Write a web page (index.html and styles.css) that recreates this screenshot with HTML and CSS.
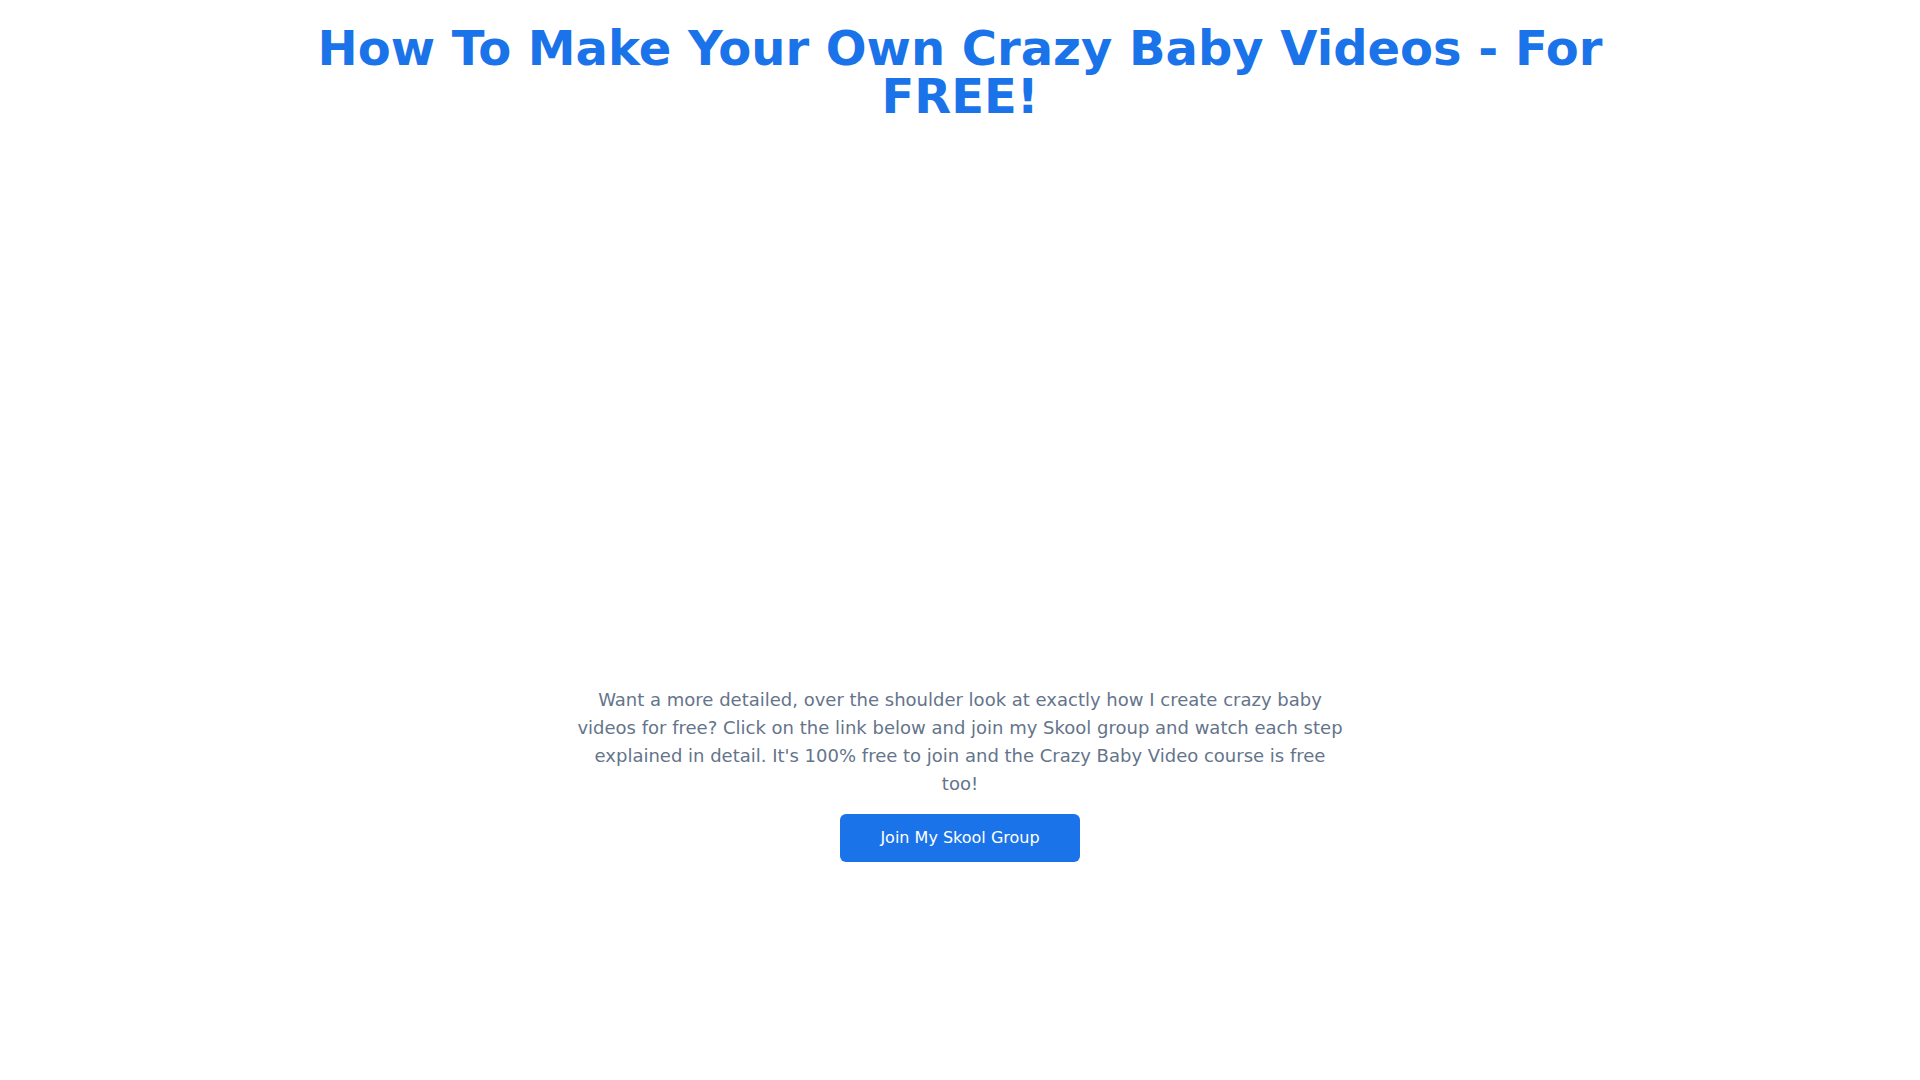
FILE: index.html
```html
<!DOCTYPE html>
<html lang="en">
<head>
<meta charset="utf-8">
<title>How To Make Your Own Crazy Baby Videos - For FREE!</title>
<link rel="stylesheet" href="styles.css">
</head>
<body>
<main class="page">
  <h1 class="title">How To Make Your Own Crazy Baby Videos - For FREE!</h1>
  <div class="video"></div>
  <p class="lead">Want a more detailed, over the shoulder look at exactly how I create crazy baby videos for free? Click on the link below and join my Skool group and watch each step explained in detail. It's 100% free to join and the Crazy Baby Video course is free too!</p>
  <a class="btn" href="#">Join My Skool Group</a>
</main>
</body>
</html>
```
FILE: styles.css
```css
html, body {
  margin: 0;
  padding: 0;
  background: #ffffff;
}
body {
  font-family: "DejaVu Sans", sans-serif;
}
.page {
  display: flex;
  flex-direction: column;
  align-items: center;
  padding: 24px 16px 40px;
}
.title {
  margin: 0;
  max-width: 1320px;
  font-size: 48px;
  line-height: 48px;
  font-weight: 700;
  color: #1a73e8;
  text-align: center;
}
.video {
  width: 896px;
  height: 566px;
}
.lead {
  margin: 0;
  max-width: 768px;
  font-size: 18px;
  line-height: 28px;
  color: #64748b;
  text-align: center;
}
.btn {
  margin-top: 16px;
  display: inline-block;
  width: 240px;
  box-sizing: border-box;
  padding: 12px 0;
  background: #1a73e8;
  color: #ffffff;
  font-size: 16px;
  line-height: 24px;
  text-align: center;
  text-decoration: none;
  border-radius: 6px;
}
```
